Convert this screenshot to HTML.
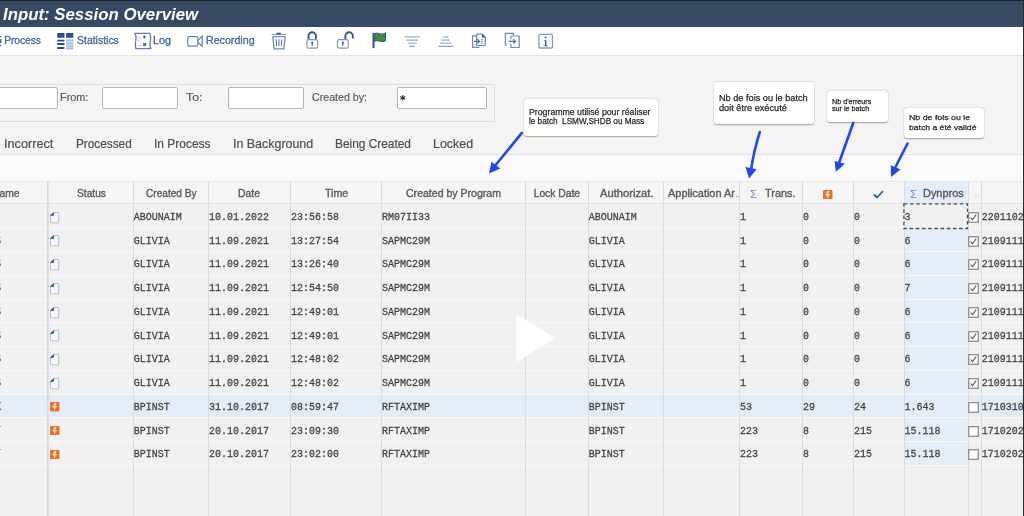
<!DOCTYPE html>
<html><head><meta charset="utf-8"><style>
html,body{margin:0;padding:0;}
body{width:1024px;height:516px;position:relative;overflow:hidden;background:#f4f4f4;font-family:'Liberation Sans', sans-serif;}
body>div,body>svg{position:absolute;}
.t{white-space:nowrap;line-height:1;}
#w{position:absolute;left:0;top:0;width:1024px;height:516px;will-change:transform;}
#w>div,#w>svg{position:absolute;}
</style></head><body><div id="w">
<div style="left:0px;top:0px;width:1024px;height:1px;background:#1c1f24"></div>
<div style="left:0px;top:1px;width:1024px;height:26px;background:#364b63"></div>
<div class="t" style="left:2.70px;top:5.60px;font-size:17.3px;font-family:'Liberation Sans', sans-serif;color:#fff;transform:scale(0.9720,1.0000);transform-origin:0 14.65px;font-weight:bold;font-style:italic">Input: Session Overview</div>
<div style="left:0px;top:27px;width:1024px;height:28px;background:#fff"></div>
<div style="left:0px;top:54.5px;width:1024px;height:1px;background:#e4e4e4"></div>
<div class="t" style="left:4.16px;top:35.65px;font-size:10.2px;font-family:'Liberation Sans', sans-serif;color:#4a6ea6;-webkit-text-stroke:0.35px #4a6ea6">Process</div>
<div class="t" style="left:76.52px;top:35.65px;font-size:10.2px;font-family:'Liberation Sans', sans-serif;color:#4a6ea6;transform:scale(1.0267,1.0000);transform-origin:0 8.60px;-webkit-text-stroke:0.35px #4a6ea6">Statistics</div>
<div class="t" style="left:153.41px;top:35.65px;font-size:10.2px;font-family:'Liberation Sans', sans-serif;color:#4a6ea6;transform:scale(1.0641,1.0000);transform-origin:0 8.60px;-webkit-text-stroke:0.35px #4a6ea6">Log</div>
<div class="t" style="left:206.12px;top:35.65px;font-size:10.2px;font-family:'Liberation Sans', sans-serif;color:#4a6ea6;transform:scale(1.0458,1.0000);transform-origin:0 8.60px;-webkit-text-stroke:0.35px #4a6ea6">Recording</div>
<div style="left:0px;top:56px;width:1024px;height:124px;background:#f4f4f4"></div>
<div style="left:-5px;top:83.5px;width:500px;height:38px;border:1px solid #dedede;box-sizing:border-box"></div>
<div style="left:-4px;top:87px;width:61.75px;height:22px;background:#fff;border:1px solid #b4b4b4;border-radius:2px;box-sizing:border-box"></div>
<div style="left:101.5px;top:87px;width:76.0px;height:22px;background:#fff;border:1px solid #b4b4b4;border-radius:2px;box-sizing:border-box"></div>
<div style="left:228px;top:87px;width:76px;height:22px;background:#fff;border:1px solid #b4b4b4;border-radius:2px;box-sizing:border-box"></div>
<div style="left:397px;top:87px;width:89.5px;height:22px;background:#fff;border:1px solid #b4b4b4;border-radius:2px;box-sizing:border-box"></div>
<div class="t" style="left:59.51px;top:92.00px;font-size:10.5px;font-family:'Liberation Sans', sans-serif;color:#555;transform:scale(1.0351,1.0000);transform-origin:0 9.25px;-webkit-text-stroke:0.15px #555">From:</div>
<div class="t" style="left:186.22px;top:92.00px;font-size:10.5px;font-family:'Liberation Sans', sans-serif;color:#555;transform:scale(1.1700,1.0000);transform-origin:0 9.25px;-webkit-text-stroke:0.15px #555">To:</div>
<div class="t" style="left:312.46px;top:92.00px;font-size:10.5px;font-family:'Liberation Sans', sans-serif;color:#555;transform:scale(1.0135,1.0000);transform-origin:0 9.25px;-webkit-text-stroke:0.15px #555">Created by:</div>
<svg style="left:399px;top:94px" width="8" height="8" viewBox="0 0 8 8"><path d="M3.8 1 V6.8 M1.3 2.45 L6.3 5.35 M1.3 5.35 L6.3 2.45" stroke="#333" stroke-width="1.1"/></svg>
<div class="t" style="left:3.83px;top:138.15px;font-size:12.2px;font-family:'Liberation Sans', sans-serif;color:#4e4e4e;transform:scale(1.0410,1.0000);transform-origin:0 10.10px;-webkit-text-stroke:0.2px #4e4e4e">Incorrect</div>
<div class="t" style="left:76.03px;top:138.15px;font-size:12.2px;font-family:'Liberation Sans', sans-serif;color:#4e4e4e;transform:scale(0.9676,1.0000);transform-origin:0 10.10px;-webkit-text-stroke:0.2px #4e4e4e">Processed</div>
<div class="t" style="left:153.89px;top:138.15px;font-size:12.2px;font-family:'Liberation Sans', sans-serif;color:#4e4e4e;transform:scale(0.9819,1.0000);transform-origin:0 10.10px;-webkit-text-stroke:0.2px #4e4e4e">In Process</div>
<div class="t" style="left:232.85px;top:138.15px;font-size:12.2px;font-family:'Liberation Sans', sans-serif;color:#4e4e4e;transform:scale(1.0202,1.0000);transform-origin:0 10.10px;-webkit-text-stroke:0.2px #4e4e4e">In Background</div>
<div class="t" style="left:335.02px;top:138.15px;font-size:12.2px;font-family:'Liberation Sans', sans-serif;color:#4e4e4e;transform:scale(0.9752,1.0000);transform-origin:0 10.10px;-webkit-text-stroke:0.2px #4e4e4e">Being Created</div>
<div class="t" style="left:433.48px;top:138.15px;font-size:12.2px;font-family:'Liberation Sans', sans-serif;color:#4e4e4e;transform:scale(1.0193,1.0000);transform-origin:0 10.10px;-webkit-text-stroke:0.2px #4e4e4e">Locked</div>
<div style="left:0px;top:153.5px;width:1024px;height:1px;background:#e2e2e2"></div>
<div style="left:0px;top:154.5px;width:1024px;height:26px;background:#fafafa"></div>
<div style="left:0px;top:180.5px;width:1024px;height:23.5px;background:#f5f5f5"></div>
<div style="left:0px;top:180.5px;width:1024px;height:1px;background:#e6e6e6"></div>
<div style="left:0px;top:203px;width:1024px;height:1px;background:#e2e2e2"></div>
<div style="left:0px;top:204px;width:1024px;height:312px;background:#f1f1f1"></div>
<div style="left:0px;top:394.0px;width:1024px;height:23.75px;background:#e3ecf7"></div>
<div style="left:904px;top:181.5px;width:64px;height:21.5px;background:#e4edf8"></div>
<div style="left:904px;top:227.75px;width:64px;height:237.5px;background:#e4edf8"></div>
<div style="left:0px;top:227.25px;width:1024px;height:1px;background:#f8f8f8"></div>
<div style="left:0px;top:251.0px;width:1024px;height:1px;background:#f8f8f8"></div>
<div style="left:0px;top:274.75px;width:1024px;height:1px;background:#f8f8f8"></div>
<div style="left:0px;top:298.5px;width:1024px;height:1px;background:#f8f8f8"></div>
<div style="left:0px;top:322.25px;width:1024px;height:1px;background:#f8f8f8"></div>
<div style="left:0px;top:346.0px;width:1024px;height:1px;background:#f8f8f8"></div>
<div style="left:0px;top:369.75px;width:1024px;height:1px;background:#f8f8f8"></div>
<div style="left:0px;top:393.5px;width:1024px;height:1px;background:#f8f8f8"></div>
<div style="left:0px;top:417.25px;width:1024px;height:1px;background:#f8f8f8"></div>
<div style="left:0px;top:441.0px;width:1024px;height:1px;background:#f8f8f8"></div>
<div style="left:0px;top:464.75px;width:1024px;height:1px;background:#f8f8f8"></div>
<div style="left:132.8px;top:180.5px;width:1px;height:335.5px;background:#dcdcdc"></div>
<div style="left:207.9px;top:180.5px;width:1px;height:335.5px;background:#dcdcdc"></div>
<div style="left:290.1px;top:180.5px;width:1px;height:335.5px;background:#dcdcdc"></div>
<div style="left:381.1px;top:180.5px;width:1px;height:335.5px;background:#dcdcdc"></div>
<div style="left:524.6px;top:180.5px;width:1px;height:335.5px;background:#dcdcdc"></div>
<div style="left:587.8px;top:180.5px;width:1px;height:335.5px;background:#dcdcdc"></div>
<div style="left:663.0px;top:180.5px;width:1px;height:335.5px;background:#dcdcdc"></div>
<div style="left:739.1px;top:180.5px;width:1px;height:335.5px;background:#dcdcdc"></div>
<div style="left:802.0px;top:180.5px;width:1px;height:335.5px;background:#dcdcdc"></div>
<div style="left:853.0px;top:180.5px;width:1px;height:335.5px;background:#dcdcdc"></div>
<div style="left:903.5px;top:180.5px;width:1px;height:335.5px;background:#dcdcdc"></div>
<div style="left:967.5px;top:180.5px;width:1px;height:335.5px;background:#dcdcdc"></div>
<div style="left:980.8px;top:180.5px;width:1px;height:335.5px;background:#dcdcdc"></div>
<div style="left:47.3px;top:180.5px;width:2px;height:335.5px;background:linear-gradient(90deg,#d2d2d2,#e6e6e6)"></div>
<div class="t" style="left:-0.44px;top:188.60px;font-size:10.3px;font-family:'Liberation Sans', sans-serif;color:#5a5a5a;-webkit-text-stroke:0.35px #5a5a5a">ame</div>
<div class="t" style="left:77.04px;top:188.60px;font-size:10.3px;font-family:'Liberation Sans', sans-serif;color:#5a5a5a;transform:scale(0.9907,1.0000);transform-origin:0 8.65px;-webkit-text-stroke:0.35px #5a5a5a">Status</div>
<div class="t" style="left:146.24px;top:188.60px;font-size:10.3px;font-family:'Liberation Sans', sans-serif;color:#5a5a5a;transform:scale(0.9809,1.0000);transform-origin:0 8.65px;-webkit-text-stroke:0.35px #5a5a5a">Created By</div>
<div class="t" style="left:238.39px;top:188.60px;font-size:10.3px;font-family:'Liberation Sans', sans-serif;color:#5a5a5a;transform:scale(1.0140,1.0000);transform-origin:0 8.65px;-webkit-text-stroke:0.35px #5a5a5a">Date</div>
<div class="t" style="left:325.26px;top:188.60px;font-size:10.3px;font-family:'Liberation Sans', sans-serif;color:#5a5a5a;transform:scale(1.0316,1.0000);transform-origin:0 8.65px;-webkit-text-stroke:0.35px #5a5a5a">Time</div>
<div class="t" style="left:406.46px;top:188.60px;font-size:10.3px;font-family:'Liberation Sans', sans-serif;color:#5a5a5a;transform:scale(1.0244,1.0000);transform-origin:0 8.65px;-webkit-text-stroke:0.35px #5a5a5a">Created by Program</div>
<div class="t" style="left:533.66px;top:188.60px;font-size:10.3px;font-family:'Liberation Sans', sans-serif;color:#5a5a5a;-webkit-text-stroke:0.35px #5a5a5a">Lock Date</div>
<div class="t" style="left:599.98px;top:188.60px;font-size:10.3px;font-family:'Liberation Sans', sans-serif;color:#5a5a5a;transform:scale(1.0875,1.0000);transform-origin:0 8.65px;-webkit-text-stroke:0.35px #5a5a5a">Authorizat.</div>
<div class="t" style="left:668.48px;top:188.60px;font-size:10.3px;font-family:'Liberation Sans', sans-serif;color:#5a5a5a;transform:scale(1.0625,1.0000);transform-origin:0 8.65px;-webkit-text-stroke:0.35px #5a5a5a">Application Ar</div>
<div class="t" style="left:764.76px;top:188.60px;font-size:10.3px;font-family:'Liberation Sans', sans-serif;color:#5a5a5a;transform:scale(1.0582,1.0000);transform-origin:0 8.65px;-webkit-text-stroke:0.35px #5a5a5a">Trans.</div>
<div class="t" style="left:923.40px;top:188.60px;font-size:10.3px;font-family:'Liberation Sans', sans-serif;color:#5a5a5a;transform:scale(1.0612,1.0000);transform-origin:0 8.65px;-webkit-text-stroke:0.35px #5a5a5a">Dynpros</div>
<div class="t" style="left:750.00px;top:189.00px;font-size:10.5px;font-family:'Liberation Sans', sans-serif;color:#6a8cc2;transform:scale(1.0848,1.0000);transform-origin:0 9.25px;">&#931;</div>
<div class="t" style="left:910.00px;top:189.00px;font-size:10.5px;font-family:'Liberation Sans', sans-serif;color:#6a8cc2;transform:scale(1.0848,1.0000);transform-origin:0 9.25px;">&#931;</div>
<div class="t" style="left:974.45px;top:192.25px;font-size:6px;font-family:'Liberation Sans', sans-serif;color:#777;">...</div>
<div style="left:736.2px;top:196px;width:2.8px;height:1px;background:#b0b0b0"></div>
<svg style="left:823px;top:189.7px" width="9.5" height="9.5" viewBox="0 0 10 10"><rect width="10" height="10" rx="1.2" fill="#e8732c"/><path d="M4.9 1.0 L2.5 5.8 L4.7 5.8 L4.1 9.3 L7.5 4.2 L5.4 4.2 L7.0 1.0 Z" fill="#fde7c6"/></svg>
<svg style="left:873px;top:190px" width="11" height="9" viewBox="0 0 11 9"><path d="M1 4.5 L4 7.5 L10 1" fill="none" stroke="#2d5ba6" stroke-width="1.8"/></svg>
<svg style="left:49.8px;top:211.6px" width="10" height="12" viewBox="0 0 10 12"><path d="M3.3 0.5 H7.9 Q8.7 0.5 8.7 1.3 V10.0 Q8.7 10.8 7.9 10.8 H1.3 Q0.5 10.8 0.5 10.0 V3.3 Z" fill="#f7f9fc" stroke="#aebfdd" stroke-width="1"/><path d="M0.4 3.6 L3.6 0.4 L3.6 3.6 Z" fill="#2a55a0" stroke="#2a55a0" stroke-width="0.6" stroke-linejoin="round"/></svg>
<div class="t" style="left:133.80px;top:212.75px;font-size:10px;font-family:'Liberation Mono', monospace;color:#404040;transform:scale(1.0000,1.1500);transform-origin:0 7.50px;-webkit-text-stroke:0.22px #404040">ABOUNAIM</div>
<div class="t" style="left:208.90px;top:212.75px;font-size:10px;font-family:'Liberation Mono', monospace;color:#404040;transform:scale(1.0000,1.1500);transform-origin:0 7.50px;-webkit-text-stroke:0.22px #404040">10.01.2022</div>
<div class="t" style="left:291.10px;top:212.75px;font-size:10px;font-family:'Liberation Mono', monospace;color:#404040;transform:scale(1.0000,1.1500);transform-origin:0 7.50px;-webkit-text-stroke:0.22px #404040">23:56:58</div>
<div class="t" style="left:382.10px;top:212.75px;font-size:10px;font-family:'Liberation Mono', monospace;color:#404040;transform:scale(1.0000,1.1500);transform-origin:0 7.50px;-webkit-text-stroke:0.22px #404040">RM07II33</div>
<div class="t" style="left:588.80px;top:212.75px;font-size:10px;font-family:'Liberation Mono', monospace;color:#404040;transform:scale(1.0000,1.1500);transform-origin:0 7.50px;-webkit-text-stroke:0.22px #404040">ABOUNAIM</div>
<div class="t" style="left:740.10px;top:212.75px;font-size:10px;font-family:'Liberation Mono', monospace;color:#404040;transform:scale(1.0000,1.1500);transform-origin:0 7.50px;-webkit-text-stroke:0.22px #404040">1</div>
<div class="t" style="left:803.00px;top:212.75px;font-size:10px;font-family:'Liberation Mono', monospace;color:#404040;transform:scale(1.0000,1.1500);transform-origin:0 7.50px;-webkit-text-stroke:0.22px #404040">0</div>
<div class="t" style="left:854.00px;top:212.75px;font-size:10px;font-family:'Liberation Mono', monospace;color:#404040;transform:scale(1.0000,1.1500);transform-origin:0 7.50px;-webkit-text-stroke:0.22px #404040">0</div>
<div class="t" style="left:904.50px;top:212.75px;font-size:10px;font-family:'Liberation Mono', monospace;color:#404040;transform:scale(1.0000,1.1500);transform-origin:0 7.50px;-webkit-text-stroke:0.22px #404040">3</div>
<div class="t" style="left:981.80px;top:212.75px;font-size:10px;font-family:'Liberation Mono', monospace;color:#404040;transform:scale(1.0000,1.1500);transform-origin:0 7.50px;-webkit-text-stroke:0.22px #404040">2201102</div>
<svg style="left:968.2px;top:211.90px" width="11" height="11" viewBox="0 0 11 11"><rect x="0.7" y="0.7" width="9.6" height="9.6" fill="#fff" stroke="#8e8e8e" stroke-width="1.3"/><path d="M2.6 5.6 L4.5 7.7 L8.2 2.6" fill="none" stroke="#5a5a5a" stroke-width="1.1"/></svg>
<svg style="left:49.8px;top:235.35px" width="10" height="12" viewBox="0 0 10 12"><path d="M3.3 0.5 H7.9 Q8.7 0.5 8.7 1.3 V10.0 Q8.7 10.8 7.9 10.8 H1.3 Q0.5 10.8 0.5 10.0 V3.3 Z" fill="#f7f9fc" stroke="#aebfdd" stroke-width="1"/><path d="M0.4 3.6 L3.6 0.4 L3.6 3.6 Z" fill="#2a55a0" stroke="#2a55a0" stroke-width="0.6" stroke-linejoin="round"/></svg>
<div class="t" style="left:133.80px;top:236.75px;font-size:10px;font-family:'Liberation Mono', monospace;color:#404040;transform:scale(1.0000,1.1500);transform-origin:0 7.50px;-webkit-text-stroke:0.22px #404040">GLIVIA</div>
<div class="t" style="left:208.90px;top:236.75px;font-size:10px;font-family:'Liberation Mono', monospace;color:#404040;transform:scale(1.0000,1.1500);transform-origin:0 7.50px;-webkit-text-stroke:0.22px #404040">11.09.2021</div>
<div class="t" style="left:291.10px;top:236.75px;font-size:10px;font-family:'Liberation Mono', monospace;color:#404040;transform:scale(1.0000,1.1500);transform-origin:0 7.50px;-webkit-text-stroke:0.22px #404040">13:27:54</div>
<div class="t" style="left:382.10px;top:236.75px;font-size:10px;font-family:'Liberation Mono', monospace;color:#404040;transform:scale(1.0000,1.1500);transform-origin:0 7.50px;-webkit-text-stroke:0.22px #404040">SAPMC29M</div>
<div class="t" style="left:588.80px;top:236.75px;font-size:10px;font-family:'Liberation Mono', monospace;color:#404040;transform:scale(1.0000,1.1500);transform-origin:0 7.50px;-webkit-text-stroke:0.22px #404040">GLIVIA</div>
<div class="t" style="left:740.10px;top:236.75px;font-size:10px;font-family:'Liberation Mono', monospace;color:#404040;transform:scale(1.0000,1.1500);transform-origin:0 7.50px;-webkit-text-stroke:0.22px #404040">1</div>
<div class="t" style="left:803.00px;top:236.75px;font-size:10px;font-family:'Liberation Mono', monospace;color:#404040;transform:scale(1.0000,1.1500);transform-origin:0 7.50px;-webkit-text-stroke:0.22px #404040">0</div>
<div class="t" style="left:854.00px;top:236.75px;font-size:10px;font-family:'Liberation Mono', monospace;color:#404040;transform:scale(1.0000,1.1500);transform-origin:0 7.50px;-webkit-text-stroke:0.22px #404040">0</div>
<div class="t" style="left:904.50px;top:236.75px;font-size:10px;font-family:'Liberation Mono', monospace;color:#404040;transform:scale(1.0000,1.1500);transform-origin:0 7.50px;-webkit-text-stroke:0.22px #404040">6</div>
<div class="t" style="left:981.80px;top:236.75px;font-size:10px;font-family:'Liberation Mono', monospace;color:#404040;transform:scale(1.0000,1.1500);transform-origin:0 7.50px;-webkit-text-stroke:0.22px #404040">2109111</div>
<div class="t" style="left:-5.45px;top:235.75px;font-size:10px;font-family:'Liberation Sans', sans-serif;color:#404040;">S</div>
<svg style="left:968.2px;top:235.65px" width="11" height="11" viewBox="0 0 11 11"><rect x="0.7" y="0.7" width="9.6" height="9.6" fill="#fff" stroke="#8e8e8e" stroke-width="1.3"/><path d="M2.6 5.6 L4.5 7.7 L8.2 2.6" fill="none" stroke="#5a5a5a" stroke-width="1.1"/></svg>
<svg style="left:49.8px;top:259.1px" width="10" height="12" viewBox="0 0 10 12"><path d="M3.3 0.5 H7.9 Q8.7 0.5 8.7 1.3 V10.0 Q8.7 10.8 7.9 10.8 H1.3 Q0.5 10.8 0.5 10.0 V3.3 Z" fill="#f7f9fc" stroke="#aebfdd" stroke-width="1"/><path d="M0.4 3.6 L3.6 0.4 L3.6 3.6 Z" fill="#2a55a0" stroke="#2a55a0" stroke-width="0.6" stroke-linejoin="round"/></svg>
<div class="t" style="left:133.80px;top:259.75px;font-size:10px;font-family:'Liberation Mono', monospace;color:#404040;transform:scale(1.0000,1.1500);transform-origin:0 7.50px;-webkit-text-stroke:0.22px #404040">GLIVIA</div>
<div class="t" style="left:208.90px;top:259.75px;font-size:10px;font-family:'Liberation Mono', monospace;color:#404040;transform:scale(1.0000,1.1500);transform-origin:0 7.50px;-webkit-text-stroke:0.22px #404040">11.09.2021</div>
<div class="t" style="left:291.10px;top:259.75px;font-size:10px;font-family:'Liberation Mono', monospace;color:#404040;transform:scale(1.0000,1.1500);transform-origin:0 7.50px;-webkit-text-stroke:0.22px #404040">13:26:40</div>
<div class="t" style="left:382.10px;top:259.75px;font-size:10px;font-family:'Liberation Mono', monospace;color:#404040;transform:scale(1.0000,1.1500);transform-origin:0 7.50px;-webkit-text-stroke:0.22px #404040">SAPMC29M</div>
<div class="t" style="left:588.80px;top:259.75px;font-size:10px;font-family:'Liberation Mono', monospace;color:#404040;transform:scale(1.0000,1.1500);transform-origin:0 7.50px;-webkit-text-stroke:0.22px #404040">GLIVIA</div>
<div class="t" style="left:740.10px;top:259.75px;font-size:10px;font-family:'Liberation Mono', monospace;color:#404040;transform:scale(1.0000,1.1500);transform-origin:0 7.50px;-webkit-text-stroke:0.22px #404040">1</div>
<div class="t" style="left:803.00px;top:259.75px;font-size:10px;font-family:'Liberation Mono', monospace;color:#404040;transform:scale(1.0000,1.1500);transform-origin:0 7.50px;-webkit-text-stroke:0.22px #404040">0</div>
<div class="t" style="left:854.00px;top:259.75px;font-size:10px;font-family:'Liberation Mono', monospace;color:#404040;transform:scale(1.0000,1.1500);transform-origin:0 7.50px;-webkit-text-stroke:0.22px #404040">0</div>
<div class="t" style="left:904.50px;top:259.75px;font-size:10px;font-family:'Liberation Mono', monospace;color:#404040;transform:scale(1.0000,1.1500);transform-origin:0 7.50px;-webkit-text-stroke:0.22px #404040">6</div>
<div class="t" style="left:981.80px;top:259.75px;font-size:10px;font-family:'Liberation Mono', monospace;color:#404040;transform:scale(1.0000,1.1500);transform-origin:0 7.50px;-webkit-text-stroke:0.22px #404040">2109111</div>
<div class="t" style="left:-5.45px;top:258.75px;font-size:10px;font-family:'Liberation Sans', sans-serif;color:#404040;">S</div>
<svg style="left:968.2px;top:259.40px" width="11" height="11" viewBox="0 0 11 11"><rect x="0.7" y="0.7" width="9.6" height="9.6" fill="#fff" stroke="#8e8e8e" stroke-width="1.3"/><path d="M2.6 5.6 L4.5 7.7 L8.2 2.6" fill="none" stroke="#5a5a5a" stroke-width="1.1"/></svg>
<svg style="left:49.8px;top:282.85px" width="10" height="12" viewBox="0 0 10 12"><path d="M3.3 0.5 H7.9 Q8.7 0.5 8.7 1.3 V10.0 Q8.7 10.8 7.9 10.8 H1.3 Q0.5 10.8 0.5 10.0 V3.3 Z" fill="#f7f9fc" stroke="#aebfdd" stroke-width="1"/><path d="M0.4 3.6 L3.6 0.4 L3.6 3.6 Z" fill="#2a55a0" stroke="#2a55a0" stroke-width="0.6" stroke-linejoin="round"/></svg>
<div class="t" style="left:133.80px;top:283.75px;font-size:10px;font-family:'Liberation Mono', monospace;color:#404040;transform:scale(1.0000,1.1500);transform-origin:0 7.50px;-webkit-text-stroke:0.22px #404040">GLIVIA</div>
<div class="t" style="left:208.90px;top:283.75px;font-size:10px;font-family:'Liberation Mono', monospace;color:#404040;transform:scale(1.0000,1.1500);transform-origin:0 7.50px;-webkit-text-stroke:0.22px #404040">11.09.2021</div>
<div class="t" style="left:291.10px;top:283.75px;font-size:10px;font-family:'Liberation Mono', monospace;color:#404040;transform:scale(1.0000,1.1500);transform-origin:0 7.50px;-webkit-text-stroke:0.22px #404040">12:54:50</div>
<div class="t" style="left:382.10px;top:283.75px;font-size:10px;font-family:'Liberation Mono', monospace;color:#404040;transform:scale(1.0000,1.1500);transform-origin:0 7.50px;-webkit-text-stroke:0.22px #404040">SAPMC29M</div>
<div class="t" style="left:588.80px;top:283.75px;font-size:10px;font-family:'Liberation Mono', monospace;color:#404040;transform:scale(1.0000,1.1500);transform-origin:0 7.50px;-webkit-text-stroke:0.22px #404040">GLIVIA</div>
<div class="t" style="left:740.10px;top:283.75px;font-size:10px;font-family:'Liberation Mono', monospace;color:#404040;transform:scale(1.0000,1.1500);transform-origin:0 7.50px;-webkit-text-stroke:0.22px #404040">1</div>
<div class="t" style="left:803.00px;top:283.75px;font-size:10px;font-family:'Liberation Mono', monospace;color:#404040;transform:scale(1.0000,1.1500);transform-origin:0 7.50px;-webkit-text-stroke:0.22px #404040">0</div>
<div class="t" style="left:854.00px;top:283.75px;font-size:10px;font-family:'Liberation Mono', monospace;color:#404040;transform:scale(1.0000,1.1500);transform-origin:0 7.50px;-webkit-text-stroke:0.22px #404040">0</div>
<div class="t" style="left:904.50px;top:283.75px;font-size:10px;font-family:'Liberation Mono', monospace;color:#404040;transform:scale(1.0000,1.1500);transform-origin:0 7.50px;-webkit-text-stroke:0.22px #404040">7</div>
<div class="t" style="left:981.80px;top:283.75px;font-size:10px;font-family:'Liberation Mono', monospace;color:#404040;transform:scale(1.0000,1.1500);transform-origin:0 7.50px;-webkit-text-stroke:0.22px #404040">2109111</div>
<div class="t" style="left:-5.45px;top:282.75px;font-size:10px;font-family:'Liberation Sans', sans-serif;color:#404040;">S</div>
<svg style="left:968.2px;top:283.15px" width="11" height="11" viewBox="0 0 11 11"><rect x="0.7" y="0.7" width="9.6" height="9.6" fill="#fff" stroke="#8e8e8e" stroke-width="1.3"/><path d="M2.6 5.6 L4.5 7.7 L8.2 2.6" fill="none" stroke="#5a5a5a" stroke-width="1.1"/></svg>
<svg style="left:49.8px;top:306.6px" width="10" height="12" viewBox="0 0 10 12"><path d="M3.3 0.5 H7.9 Q8.7 0.5 8.7 1.3 V10.0 Q8.7 10.8 7.9 10.8 H1.3 Q0.5 10.8 0.5 10.0 V3.3 Z" fill="#f7f9fc" stroke="#aebfdd" stroke-width="1"/><path d="M0.4 3.6 L3.6 0.4 L3.6 3.6 Z" fill="#2a55a0" stroke="#2a55a0" stroke-width="0.6" stroke-linejoin="round"/></svg>
<div class="t" style="left:133.80px;top:307.75px;font-size:10px;font-family:'Liberation Mono', monospace;color:#404040;transform:scale(1.0000,1.1500);transform-origin:0 7.50px;-webkit-text-stroke:0.22px #404040">GLIVIA</div>
<div class="t" style="left:208.90px;top:307.75px;font-size:10px;font-family:'Liberation Mono', monospace;color:#404040;transform:scale(1.0000,1.1500);transform-origin:0 7.50px;-webkit-text-stroke:0.22px #404040">11.09.2021</div>
<div class="t" style="left:291.10px;top:307.75px;font-size:10px;font-family:'Liberation Mono', monospace;color:#404040;transform:scale(1.0000,1.1500);transform-origin:0 7.50px;-webkit-text-stroke:0.22px #404040">12:49:01</div>
<div class="t" style="left:382.10px;top:307.75px;font-size:10px;font-family:'Liberation Mono', monospace;color:#404040;transform:scale(1.0000,1.1500);transform-origin:0 7.50px;-webkit-text-stroke:0.22px #404040">SAPMC29M</div>
<div class="t" style="left:588.80px;top:307.75px;font-size:10px;font-family:'Liberation Mono', monospace;color:#404040;transform:scale(1.0000,1.1500);transform-origin:0 7.50px;-webkit-text-stroke:0.22px #404040">GLIVIA</div>
<div class="t" style="left:740.10px;top:307.75px;font-size:10px;font-family:'Liberation Mono', monospace;color:#404040;transform:scale(1.0000,1.1500);transform-origin:0 7.50px;-webkit-text-stroke:0.22px #404040">1</div>
<div class="t" style="left:803.00px;top:307.75px;font-size:10px;font-family:'Liberation Mono', monospace;color:#404040;transform:scale(1.0000,1.1500);transform-origin:0 7.50px;-webkit-text-stroke:0.22px #404040">0</div>
<div class="t" style="left:854.00px;top:307.75px;font-size:10px;font-family:'Liberation Mono', monospace;color:#404040;transform:scale(1.0000,1.1500);transform-origin:0 7.50px;-webkit-text-stroke:0.22px #404040">0</div>
<div class="t" style="left:904.50px;top:307.75px;font-size:10px;font-family:'Liberation Mono', monospace;color:#404040;transform:scale(1.0000,1.1500);transform-origin:0 7.50px;-webkit-text-stroke:0.22px #404040">6</div>
<div class="t" style="left:981.80px;top:307.75px;font-size:10px;font-family:'Liberation Mono', monospace;color:#404040;transform:scale(1.0000,1.1500);transform-origin:0 7.50px;-webkit-text-stroke:0.22px #404040">2109111</div>
<div class="t" style="left:-5.45px;top:306.75px;font-size:10px;font-family:'Liberation Sans', sans-serif;color:#404040;">S</div>
<svg style="left:968.2px;top:306.90px" width="11" height="11" viewBox="0 0 11 11"><rect x="0.7" y="0.7" width="9.6" height="9.6" fill="#fff" stroke="#8e8e8e" stroke-width="1.3"/><path d="M2.6 5.6 L4.5 7.7 L8.2 2.6" fill="none" stroke="#5a5a5a" stroke-width="1.1"/></svg>
<svg style="left:49.8px;top:330.35px" width="10" height="12" viewBox="0 0 10 12"><path d="M3.3 0.5 H7.9 Q8.7 0.5 8.7 1.3 V10.0 Q8.7 10.8 7.9 10.8 H1.3 Q0.5 10.8 0.5 10.0 V3.3 Z" fill="#f7f9fc" stroke="#aebfdd" stroke-width="1"/><path d="M0.4 3.6 L3.6 0.4 L3.6 3.6 Z" fill="#2a55a0" stroke="#2a55a0" stroke-width="0.6" stroke-linejoin="round"/></svg>
<div class="t" style="left:133.80px;top:331.75px;font-size:10px;font-family:'Liberation Mono', monospace;color:#404040;transform:scale(1.0000,1.1500);transform-origin:0 7.50px;-webkit-text-stroke:0.22px #404040">GLIVIA</div>
<div class="t" style="left:208.90px;top:331.75px;font-size:10px;font-family:'Liberation Mono', monospace;color:#404040;transform:scale(1.0000,1.1500);transform-origin:0 7.50px;-webkit-text-stroke:0.22px #404040">11.09.2021</div>
<div class="t" style="left:291.10px;top:331.75px;font-size:10px;font-family:'Liberation Mono', monospace;color:#404040;transform:scale(1.0000,1.1500);transform-origin:0 7.50px;-webkit-text-stroke:0.22px #404040">12:49:01</div>
<div class="t" style="left:382.10px;top:331.75px;font-size:10px;font-family:'Liberation Mono', monospace;color:#404040;transform:scale(1.0000,1.1500);transform-origin:0 7.50px;-webkit-text-stroke:0.22px #404040">SAPMC29M</div>
<div class="t" style="left:588.80px;top:331.75px;font-size:10px;font-family:'Liberation Mono', monospace;color:#404040;transform:scale(1.0000,1.1500);transform-origin:0 7.50px;-webkit-text-stroke:0.22px #404040">GLIVIA</div>
<div class="t" style="left:740.10px;top:331.75px;font-size:10px;font-family:'Liberation Mono', monospace;color:#404040;transform:scale(1.0000,1.1500);transform-origin:0 7.50px;-webkit-text-stroke:0.22px #404040">1</div>
<div class="t" style="left:803.00px;top:331.75px;font-size:10px;font-family:'Liberation Mono', monospace;color:#404040;transform:scale(1.0000,1.1500);transform-origin:0 7.50px;-webkit-text-stroke:0.22px #404040">0</div>
<div class="t" style="left:854.00px;top:331.75px;font-size:10px;font-family:'Liberation Mono', monospace;color:#404040;transform:scale(1.0000,1.1500);transform-origin:0 7.50px;-webkit-text-stroke:0.22px #404040">0</div>
<div class="t" style="left:904.50px;top:331.75px;font-size:10px;font-family:'Liberation Mono', monospace;color:#404040;transform:scale(1.0000,1.1500);transform-origin:0 7.50px;-webkit-text-stroke:0.22px #404040">6</div>
<div class="t" style="left:981.80px;top:331.75px;font-size:10px;font-family:'Liberation Mono', monospace;color:#404040;transform:scale(1.0000,1.1500);transform-origin:0 7.50px;-webkit-text-stroke:0.22px #404040">2109111</div>
<div class="t" style="left:-5.45px;top:330.75px;font-size:10px;font-family:'Liberation Sans', sans-serif;color:#404040;">S</div>
<svg style="left:968.2px;top:330.65px" width="11" height="11" viewBox="0 0 11 11"><rect x="0.7" y="0.7" width="9.6" height="9.6" fill="#fff" stroke="#8e8e8e" stroke-width="1.3"/><path d="M2.6 5.6 L4.5 7.7 L8.2 2.6" fill="none" stroke="#5a5a5a" stroke-width="1.1"/></svg>
<svg style="left:49.8px;top:354.1px" width="10" height="12" viewBox="0 0 10 12"><path d="M3.3 0.5 H7.9 Q8.7 0.5 8.7 1.3 V10.0 Q8.7 10.8 7.9 10.8 H1.3 Q0.5 10.8 0.5 10.0 V3.3 Z" fill="#f7f9fc" stroke="#aebfdd" stroke-width="1"/><path d="M0.4 3.6 L3.6 0.4 L3.6 3.6 Z" fill="#2a55a0" stroke="#2a55a0" stroke-width="0.6" stroke-linejoin="round"/></svg>
<div class="t" style="left:133.80px;top:354.75px;font-size:10px;font-family:'Liberation Mono', monospace;color:#404040;transform:scale(1.0000,1.1500);transform-origin:0 7.50px;-webkit-text-stroke:0.22px #404040">GLIVIA</div>
<div class="t" style="left:208.90px;top:354.75px;font-size:10px;font-family:'Liberation Mono', monospace;color:#404040;transform:scale(1.0000,1.1500);transform-origin:0 7.50px;-webkit-text-stroke:0.22px #404040">11.09.2021</div>
<div class="t" style="left:291.10px;top:354.75px;font-size:10px;font-family:'Liberation Mono', monospace;color:#404040;transform:scale(1.0000,1.1500);transform-origin:0 7.50px;-webkit-text-stroke:0.22px #404040">12:48:02</div>
<div class="t" style="left:382.10px;top:354.75px;font-size:10px;font-family:'Liberation Mono', monospace;color:#404040;transform:scale(1.0000,1.1500);transform-origin:0 7.50px;-webkit-text-stroke:0.22px #404040">SAPMC29M</div>
<div class="t" style="left:588.80px;top:354.75px;font-size:10px;font-family:'Liberation Mono', monospace;color:#404040;transform:scale(1.0000,1.1500);transform-origin:0 7.50px;-webkit-text-stroke:0.22px #404040">GLIVIA</div>
<div class="t" style="left:740.10px;top:354.75px;font-size:10px;font-family:'Liberation Mono', monospace;color:#404040;transform:scale(1.0000,1.1500);transform-origin:0 7.50px;-webkit-text-stroke:0.22px #404040">1</div>
<div class="t" style="left:803.00px;top:354.75px;font-size:10px;font-family:'Liberation Mono', monospace;color:#404040;transform:scale(1.0000,1.1500);transform-origin:0 7.50px;-webkit-text-stroke:0.22px #404040">0</div>
<div class="t" style="left:854.00px;top:354.75px;font-size:10px;font-family:'Liberation Mono', monospace;color:#404040;transform:scale(1.0000,1.1500);transform-origin:0 7.50px;-webkit-text-stroke:0.22px #404040">0</div>
<div class="t" style="left:904.50px;top:354.75px;font-size:10px;font-family:'Liberation Mono', monospace;color:#404040;transform:scale(1.0000,1.1500);transform-origin:0 7.50px;-webkit-text-stroke:0.22px #404040">6</div>
<div class="t" style="left:981.80px;top:354.75px;font-size:10px;font-family:'Liberation Mono', monospace;color:#404040;transform:scale(1.0000,1.1500);transform-origin:0 7.50px;-webkit-text-stroke:0.22px #404040">2109111</div>
<div class="t" style="left:-5.45px;top:353.75px;font-size:10px;font-family:'Liberation Sans', sans-serif;color:#404040;">S</div>
<svg style="left:968.2px;top:354.40px" width="11" height="11" viewBox="0 0 11 11"><rect x="0.7" y="0.7" width="9.6" height="9.6" fill="#fff" stroke="#8e8e8e" stroke-width="1.3"/><path d="M2.6 5.6 L4.5 7.7 L8.2 2.6" fill="none" stroke="#5a5a5a" stroke-width="1.1"/></svg>
<svg style="left:49.8px;top:377.85px" width="10" height="12" viewBox="0 0 10 12"><path d="M3.3 0.5 H7.9 Q8.7 0.5 8.7 1.3 V10.0 Q8.7 10.8 7.9 10.8 H1.3 Q0.5 10.8 0.5 10.0 V3.3 Z" fill="#f7f9fc" stroke="#aebfdd" stroke-width="1"/><path d="M0.4 3.6 L3.6 0.4 L3.6 3.6 Z" fill="#2a55a0" stroke="#2a55a0" stroke-width="0.6" stroke-linejoin="round"/></svg>
<div class="t" style="left:133.80px;top:378.75px;font-size:10px;font-family:'Liberation Mono', monospace;color:#404040;transform:scale(1.0000,1.1500);transform-origin:0 7.50px;-webkit-text-stroke:0.22px #404040">GLIVIA</div>
<div class="t" style="left:208.90px;top:378.75px;font-size:10px;font-family:'Liberation Mono', monospace;color:#404040;transform:scale(1.0000,1.1500);transform-origin:0 7.50px;-webkit-text-stroke:0.22px #404040">11.09.2021</div>
<div class="t" style="left:291.10px;top:378.75px;font-size:10px;font-family:'Liberation Mono', monospace;color:#404040;transform:scale(1.0000,1.1500);transform-origin:0 7.50px;-webkit-text-stroke:0.22px #404040">12:48:02</div>
<div class="t" style="left:382.10px;top:378.75px;font-size:10px;font-family:'Liberation Mono', monospace;color:#404040;transform:scale(1.0000,1.1500);transform-origin:0 7.50px;-webkit-text-stroke:0.22px #404040">SAPMC29M</div>
<div class="t" style="left:588.80px;top:378.75px;font-size:10px;font-family:'Liberation Mono', monospace;color:#404040;transform:scale(1.0000,1.1500);transform-origin:0 7.50px;-webkit-text-stroke:0.22px #404040">GLIVIA</div>
<div class="t" style="left:740.10px;top:378.75px;font-size:10px;font-family:'Liberation Mono', monospace;color:#404040;transform:scale(1.0000,1.1500);transform-origin:0 7.50px;-webkit-text-stroke:0.22px #404040">1</div>
<div class="t" style="left:803.00px;top:378.75px;font-size:10px;font-family:'Liberation Mono', monospace;color:#404040;transform:scale(1.0000,1.1500);transform-origin:0 7.50px;-webkit-text-stroke:0.22px #404040">0</div>
<div class="t" style="left:854.00px;top:378.75px;font-size:10px;font-family:'Liberation Mono', monospace;color:#404040;transform:scale(1.0000,1.1500);transform-origin:0 7.50px;-webkit-text-stroke:0.22px #404040">0</div>
<div class="t" style="left:904.50px;top:378.75px;font-size:10px;font-family:'Liberation Mono', monospace;color:#404040;transform:scale(1.0000,1.1500);transform-origin:0 7.50px;-webkit-text-stroke:0.22px #404040">6</div>
<div class="t" style="left:981.80px;top:378.75px;font-size:10px;font-family:'Liberation Mono', monospace;color:#404040;transform:scale(1.0000,1.1500);transform-origin:0 7.50px;-webkit-text-stroke:0.22px #404040">2109111</div>
<div class="t" style="left:-5.45px;top:377.75px;font-size:10px;font-family:'Liberation Sans', sans-serif;color:#404040;">S</div>
<svg style="left:968.2px;top:378.15px" width="11" height="11" viewBox="0 0 11 11"><rect x="0.7" y="0.7" width="9.6" height="9.6" fill="#fff" stroke="#8e8e8e" stroke-width="1.3"/><path d="M2.6 5.6 L4.5 7.7 L8.2 2.6" fill="none" stroke="#5a5a5a" stroke-width="1.1"/></svg>
<svg style="left:50px;top:402.0px" width="9.5" height="9.5" viewBox="0 0 10 10"><rect width="10" height="10" rx="1.2" fill="#e8732c"/><path d="M4.9 1.0 L2.5 5.8 L4.7 5.8 L4.1 9.3 L7.5 4.2 L5.4 4.2 L7.0 1.0 Z" fill="#fde7c6"/></svg>
<div class="t" style="left:133.80px;top:402.75px;font-size:10px;font-family:'Liberation Mono', monospace;color:#404040;transform:scale(1.0000,1.1500);transform-origin:0 7.50px;-webkit-text-stroke:0.22px #404040">BPINST</div>
<div class="t" style="left:208.90px;top:402.75px;font-size:10px;font-family:'Liberation Mono', monospace;color:#404040;transform:scale(1.0000,1.1500);transform-origin:0 7.50px;-webkit-text-stroke:0.22px #404040">31.10.2017</div>
<div class="t" style="left:291.10px;top:402.75px;font-size:10px;font-family:'Liberation Mono', monospace;color:#404040;transform:scale(1.0000,1.1500);transform-origin:0 7.50px;-webkit-text-stroke:0.22px #404040">08:59:47</div>
<div class="t" style="left:382.10px;top:402.75px;font-size:10px;font-family:'Liberation Mono', monospace;color:#404040;transform:scale(1.0000,1.1500);transform-origin:0 7.50px;-webkit-text-stroke:0.22px #404040">RFTAXIMP</div>
<div class="t" style="left:588.80px;top:402.75px;font-size:10px;font-family:'Liberation Mono', monospace;color:#404040;transform:scale(1.0000,1.1500);transform-origin:0 7.50px;-webkit-text-stroke:0.22px #404040">BPINST</div>
<div class="t" style="left:740.10px;top:402.75px;font-size:10px;font-family:'Liberation Mono', monospace;color:#404040;transform:scale(1.0000,1.1500);transform-origin:0 7.50px;-webkit-text-stroke:0.22px #404040">53</div>
<div class="t" style="left:803.00px;top:402.75px;font-size:10px;font-family:'Liberation Mono', monospace;color:#404040;transform:scale(1.0000,1.1500);transform-origin:0 7.50px;-webkit-text-stroke:0.22px #404040">29</div>
<div class="t" style="left:854.00px;top:402.75px;font-size:10px;font-family:'Liberation Mono', monospace;color:#404040;transform:scale(1.0000,1.1500);transform-origin:0 7.50px;-webkit-text-stroke:0.22px #404040">24</div>
<div class="t" style="left:904.50px;top:402.75px;font-size:10px;font-family:'Liberation Mono', monospace;color:#404040;transform:scale(1.0000,1.1500);transform-origin:0 7.50px;-webkit-text-stroke:0.22px #404040">1.643</div>
<div class="t" style="left:981.80px;top:402.75px;font-size:10px;font-family:'Liberation Mono', monospace;color:#404040;transform:scale(1.0000,1.1500);transform-origin:0 7.50px;-webkit-text-stroke:0.22px #404040">1710310</div>
<div class="t" style="left:-5.22px;top:401.75px;font-size:10px;font-family:'Liberation Sans', sans-serif;color:#404040;">X</div>
<svg style="left:968.2px;top:401.90px" width="11" height="11" viewBox="0 0 11 11"><rect x="0.7" y="0.7" width="9.6" height="9.6" fill="#fff" stroke="#8e8e8e" stroke-width="1.3"/></svg>
<svg style="left:50px;top:425.75px" width="9.5" height="9.5" viewBox="0 0 10 10"><rect width="10" height="10" rx="1.2" fill="#e8732c"/><path d="M4.9 1.0 L2.5 5.8 L4.7 5.8 L4.1 9.3 L7.5 4.2 L5.4 4.2 L7.0 1.0 Z" fill="#fde7c6"/></svg>
<div class="t" style="left:133.80px;top:426.75px;font-size:10px;font-family:'Liberation Mono', monospace;color:#404040;transform:scale(1.0000,1.1500);transform-origin:0 7.50px;-webkit-text-stroke:0.22px #404040">BPINST</div>
<div class="t" style="left:208.90px;top:426.75px;font-size:10px;font-family:'Liberation Mono', monospace;color:#404040;transform:scale(1.0000,1.1500);transform-origin:0 7.50px;-webkit-text-stroke:0.22px #404040">20.10.2017</div>
<div class="t" style="left:291.10px;top:426.75px;font-size:10px;font-family:'Liberation Mono', monospace;color:#404040;transform:scale(1.0000,1.1500);transform-origin:0 7.50px;-webkit-text-stroke:0.22px #404040">23:09:30</div>
<div class="t" style="left:382.10px;top:426.75px;font-size:10px;font-family:'Liberation Mono', monospace;color:#404040;transform:scale(1.0000,1.1500);transform-origin:0 7.50px;-webkit-text-stroke:0.22px #404040">RFTAXIMP</div>
<div class="t" style="left:588.80px;top:426.75px;font-size:10px;font-family:'Liberation Mono', monospace;color:#404040;transform:scale(1.0000,1.1500);transform-origin:0 7.50px;-webkit-text-stroke:0.22px #404040">BPINST</div>
<div class="t" style="left:740.10px;top:426.75px;font-size:10px;font-family:'Liberation Mono', monospace;color:#404040;transform:scale(1.0000,1.1500);transform-origin:0 7.50px;-webkit-text-stroke:0.22px #404040">223</div>
<div class="t" style="left:803.00px;top:426.75px;font-size:10px;font-family:'Liberation Mono', monospace;color:#404040;transform:scale(1.0000,1.1500);transform-origin:0 7.50px;-webkit-text-stroke:0.22px #404040">8</div>
<div class="t" style="left:854.00px;top:426.75px;font-size:10px;font-family:'Liberation Mono', monospace;color:#404040;transform:scale(1.0000,1.1500);transform-origin:0 7.50px;-webkit-text-stroke:0.22px #404040">215</div>
<div class="t" style="left:904.50px;top:426.75px;font-size:10px;font-family:'Liberation Mono', monospace;color:#404040;transform:scale(1.0000,1.1500);transform-origin:0 7.50px;-webkit-text-stroke:0.22px #404040">15.118</div>
<div class="t" style="left:981.80px;top:426.75px;font-size:10px;font-family:'Liberation Mono', monospace;color:#404040;transform:scale(1.0000,1.1500);transform-origin:0 7.50px;-webkit-text-stroke:0.22px #404040">1710202</div>
<div class="t" style="left:-5.22px;top:425.75px;font-size:10px;font-family:'Liberation Sans', sans-serif;color:#404040;">T</div>
<svg style="left:968.2px;top:425.65px" width="11" height="11" viewBox="0 0 11 11"><rect x="0.7" y="0.7" width="9.6" height="9.6" fill="#fff" stroke="#8e8e8e" stroke-width="1.3"/></svg>
<svg style="left:50px;top:449.5px" width="9.5" height="9.5" viewBox="0 0 10 10"><rect width="10" height="10" rx="1.2" fill="#e8732c"/><path d="M4.9 1.0 L2.5 5.8 L4.7 5.8 L4.1 9.3 L7.5 4.2 L5.4 4.2 L7.0 1.0 Z" fill="#fde7c6"/></svg>
<div class="t" style="left:133.80px;top:449.75px;font-size:10px;font-family:'Liberation Mono', monospace;color:#404040;transform:scale(1.0000,1.1500);transform-origin:0 7.50px;-webkit-text-stroke:0.22px #404040">BPINST</div>
<div class="t" style="left:208.90px;top:449.75px;font-size:10px;font-family:'Liberation Mono', monospace;color:#404040;transform:scale(1.0000,1.1500);transform-origin:0 7.50px;-webkit-text-stroke:0.22px #404040">20.10.2017</div>
<div class="t" style="left:291.10px;top:449.75px;font-size:10px;font-family:'Liberation Mono', monospace;color:#404040;transform:scale(1.0000,1.1500);transform-origin:0 7.50px;-webkit-text-stroke:0.22px #404040">23:02:00</div>
<div class="t" style="left:382.10px;top:449.75px;font-size:10px;font-family:'Liberation Mono', monospace;color:#404040;transform:scale(1.0000,1.1500);transform-origin:0 7.50px;-webkit-text-stroke:0.22px #404040">RFTAXIMP</div>
<div class="t" style="left:588.80px;top:449.75px;font-size:10px;font-family:'Liberation Mono', monospace;color:#404040;transform:scale(1.0000,1.1500);transform-origin:0 7.50px;-webkit-text-stroke:0.22px #404040">BPINST</div>
<div class="t" style="left:740.10px;top:449.75px;font-size:10px;font-family:'Liberation Mono', monospace;color:#404040;transform:scale(1.0000,1.1500);transform-origin:0 7.50px;-webkit-text-stroke:0.22px #404040">223</div>
<div class="t" style="left:803.00px;top:449.75px;font-size:10px;font-family:'Liberation Mono', monospace;color:#404040;transform:scale(1.0000,1.1500);transform-origin:0 7.50px;-webkit-text-stroke:0.22px #404040">8</div>
<div class="t" style="left:854.00px;top:449.75px;font-size:10px;font-family:'Liberation Mono', monospace;color:#404040;transform:scale(1.0000,1.1500);transform-origin:0 7.50px;-webkit-text-stroke:0.22px #404040">215</div>
<div class="t" style="left:904.50px;top:449.75px;font-size:10px;font-family:'Liberation Mono', monospace;color:#404040;transform:scale(1.0000,1.1500);transform-origin:0 7.50px;-webkit-text-stroke:0.22px #404040">15.118</div>
<div class="t" style="left:981.80px;top:449.75px;font-size:10px;font-family:'Liberation Mono', monospace;color:#404040;transform:scale(1.0000,1.1500);transform-origin:0 7.50px;-webkit-text-stroke:0.22px #404040">1710202</div>
<div class="t" style="left:-5.22px;top:448.75px;font-size:10px;font-family:'Liberation Sans', sans-serif;color:#404040;">T</div>
<svg style="left:968.2px;top:449.40px" width="11" height="11" viewBox="0 0 11 11"><rect x="0.7" y="0.7" width="9.6" height="9.6" fill="#fff" stroke="#8e8e8e" stroke-width="1.3"/></svg>
<svg style="left:900px;top:200px" width="72" height="32"><rect x="3.9" y="3.9" width="63.6" height="24.6" fill="none" stroke="#4d4d4d" stroke-width="1.3" stroke-dasharray="3.6 2.6"/></svg>
<div style="left:1022.5px;top:0px;width:1.5px;height:516px;background:#2b2b2b"></div>
<svg style="left:0;top:0" width="1024" height="60">
<!-- partial process icon at left edge -->
<path d="M-2 36.5 H1.2 M-2 45.5 H1.2" stroke="#3f66a8" stroke-width="1.4"/>
<rect x="0" y="39" width="1.4" height="4" fill="#3f66a8"/>
<!-- statistics -->
<g fill="#234f9e">
<rect x="57.2" y="33" width="7.3" height="4.8" rx="0.5"/>
<rect x="66.1" y="33" width="7.2" height="4.8" rx="0.5"/>
<rect x="57.2" y="39.8" width="7.3" height="1.8" rx="0.5"/>
<rect x="57.2" y="43" width="7.3" height="1.9" rx="0.5"/>
<rect x="57.2" y="47" width="7.3" height="2" rx="0.5"/>
</g>
<rect x="66.1" y="39.3" width="7.2" height="10.2" fill="#d3def0"/>
<g fill="#a9bcdd">
<rect x="66.1" y="39.6" width="7.2" height="1.6"/>
<rect x="66.1" y="42.6" width="7.2" height="1.6"/>
<rect x="66.1" y="45.3" width="7.2" height="1.4"/>
<rect x="66.1" y="47.6" width="7.2" height="1.8"/>
</g>
<!-- log -->
<path d="M135 33.4 H149.8 C151 36 151 38 150.3 41 C149.6 44 149.8 46 150.8 48.6 H135.9 C135 46 134.7 44 135.7 41 C136.6 38 136.4 36 135 33.4 Z" fill="#fff" stroke="#5d7db3" stroke-width="1.3"/>
<rect x="143.3" y="35.6" width="2.2" height="2.8" rx="1" fill="#2a55a0"/>
<path d="M143.3 43.2 L146 45.9 M146 43.2 L143.3 45.9" stroke="#2a55a0" stroke-width="1.3"/>
<g fill="#c3cad6"><rect x="138" y="37.3" width="3.2" height="0.9"/><rect x="138" y="40" width="1.6" height="0.9"/><rect x="138" y="42.5" width="1.6" height="0.9"/><rect x="138" y="45" width="3.2" height="0.9"/></g>
<!-- recording -->
<rect x="187.7" y="36.7" width="10.2" height="9.5" rx="1.6" fill="none" stroke="#6783b6" stroke-width="1.2"/>
<path d="M198 40.6 L202.2 36 V46.6 L198 42" fill="none" stroke="#6783b6" stroke-width="1.2" stroke-linejoin="round"/>
<!-- trash -->
<rect x="276.3" y="32.8" width="4.7" height="1.6" rx="0.8" fill="#2d5597"/>
<rect x="271.6" y="34" width="14.3" height="0.9" fill="#6d89b9"/>
<path d="M272.8 36.6 H285.2 L283.9 48.9 H274.1 Z" fill="#fff" stroke="#6f8bbb" stroke-width="1.3" stroke-linejoin="round"/>
<path d="M276.2 39.2 L276.6 46 M278.9 39.2 V46 M281.7 39.2 L281.3 46" stroke="#5b7bb2" stroke-width="1.1"/>
<!-- lock -->
<path d="M308.5 39.6 V36 A3.7 3.7 0 0 1 315.9 36 V39.6" fill="none" stroke="#2d5597" stroke-width="1.9"/>
<rect x="306.9" y="39.6" width="10.7" height="8.6" rx="1.6" fill="#fff" stroke="#8397bc" stroke-width="1.2"/>
<circle cx="312.2" cy="42.6" r="1" fill="#2d5597"/><rect x="311.6" y="42.6" width="1.2" height="3" fill="#2d5597"/>
<!-- unlock -->
<path d="M345.4 39.6 V36 A3.7 3.7 0 0 1 352.8 36 V38.6" fill="none" stroke="#2d5597" stroke-width="1.9"/>
<rect x="337.5" y="39.6" width="10.7" height="8.6" rx="1.6" fill="#fff" stroke="#8397bc" stroke-width="1.2"/>
<circle cx="342.8" cy="42.6" r="1" fill="#2d5597"/><rect x="342.2" y="42.6" width="1.2" height="3" fill="#2d5597"/>
<!-- flag -->
<rect x="372.5" y="32.8" width="2.1" height="15.3" fill="#3a5690"/>
<path d="M374.6 33.6 C377 32.6 379 33.6 381 34 C383 34.3 384.5 33.5 385.5 32.6 V40.8 C384 41.8 382 41.6 380 41.2 C378 40.8 376.5 40.6 374.6 41.2 Z" fill="#3d8a3f" stroke="#2f5a7c" stroke-width="1"/>
<!-- filter 1 -->
<g stroke-width="1.1">
<path d="M404.6 37 H419.7" stroke="#8ba5cc"/>
<path d="M406.1 40.1 H418" stroke="#9099aa"/>
<path d="M407.9 43.1 H416.7" stroke="#8ba5cc"/>
<path d="M409.3 46.3 H415" stroke="#7f9ac5"/>
<!-- filter 2 -->
<path d="M442.9 37 H448.4" stroke="#8ba5cc"/>
<path d="M441.1 40.1 H450" stroke="#9099aa"/>
<path d="M439.8 43.1 H451.7" stroke="#8ba5cc"/>
<path d="M438 46.3 H453.3" stroke="#7f9ac5"/>
</g>
<!-- export -->
<path d="M476 35.8 H472.6 V47.4 H479.5" fill="none" stroke="#6f8bbb" stroke-width="1.2"/>
<path d="M476.6 34.2 H482.2 L485.3 37.3 V45.5 H476.6 Z" fill="#fff" stroke="#6f8bbb" stroke-width="1.2"/>
<path d="M482 34 L485.6 37.6 H482 Z" fill="#2a55a0"/>
<path d="M474 41.4 H479.3 M477.3 39.2 L479.6 41.4 L477.3 43.6" fill="none" stroke="#4a6eab" stroke-width="1.1"/>
<g fill="#7890bb"><rect x="481" y="39" width="2.4" height="0.8"/><rect x="481" y="40.9" width="2.4" height="0.8"/><rect x="481" y="42.8" width="2.4" height="0.8"/></g>
<!-- import -->
<path d="M507 45 H505.4 V33.3 H513.4 V35.8" fill="none" stroke="#6f8bbb" stroke-width="1.2"/>
<path d="M510.9 36 H519.2 V47.5 H510.9 V43.5 M510.9 39.3 V36" fill="none" stroke="#6f8bbb" stroke-width="1.2"/>
<path d="M508.8 41.4 H515.3 M513.2 39.2 L515.5 41.4 L513.2 43.6" fill="none" stroke="#4a6eab" stroke-width="1.1"/>
<!-- info -->
<rect x="538.9" y="34.4" width="13.6" height="13.6" rx="1" fill="#fff" stroke="#8599bf" stroke-width="1.3"/>
<circle cx="545.5" cy="37.4" r="0.95" fill="#2a55a0"/>
<path d="M544 40.2 H546.4 V45.4 H547.9 V46.2 H543.6 V45.4 H545 V41 H544 Z" fill="#2a55a0"/>
</svg>

<div style="left:523.8px;top:99px;width:134.4000000000001px;height:36.599999999999994px;background:#fff;border-radius:3px;box-shadow:0 0.5px 1.5px rgba(0,0,0,0.35)"></div>
<div class="t" style="left:529.08px;top:107.90px;font-size:8.7px;font-family:'Liberation Sans', sans-serif;color:#2a2a2a;transform:scale(1.0066,1.0000);transform-origin:0 7.35px;-webkit-text-stroke:0.25px #2a2a2a">Programme utilisé pour réaliser</div>
<div class="t" style="left:529.12px;top:116.90px;font-size:8.7px;font-family:'Liberation Sans', sans-serif;color:#2a2a2a;transform:scale(0.9393,1.0000);transform-origin:0 7.35px;-webkit-text-stroke:0.25px #2a2a2a">le batch&nbsp; LSMW,SHDB ou Mass</div>
<div style="left:714.3px;top:82.3px;width:99.60000000000002px;height:41.8px;background:#fff;border-radius:3px;box-shadow:0 0.5px 1.5px rgba(0,0,0,0.35)"></div>
<div class="t" style="left:719.25px;top:93.75px;font-size:9.0px;font-family:'Liberation Sans', sans-serif;color:#2a2a2a;transform:scale(1.0182,1.0000);transform-origin:0 7.50px;-webkit-text-stroke:0.25px #2a2a2a">Nb de fois ou le batch</div>
<div class="t" style="left:719.25px;top:103.75px;font-size:9.0px;font-family:'Liberation Sans', sans-serif;color:#2a2a2a;transform:scale(1.0187,1.0000);transform-origin:0 7.50px;-webkit-text-stroke:0.25px #2a2a2a">doit être exécuté</div>
<div style="left:826.9px;top:90.9px;width:61.10000000000002px;height:31.0px;background:#fff;border-radius:3px;box-shadow:0 0.5px 1.5px rgba(0,0,0,0.35)"></div>
<div class="t" style="left:832.11px;top:99.35px;font-size:6.8px;font-family:'Liberation Sans', sans-serif;color:#2a2a2a;transform:scale(1.0582,1.0000);transform-origin:0 5.90px;-webkit-text-stroke:0.25px #2a2a2a">Nb d'erreurs</div>
<div class="t" style="left:832.13px;top:106.35px;font-size:6.8px;font-family:'Liberation Sans', sans-serif;color:#2a2a2a;transform:scale(1.0577,1.0000);transform-origin:0 5.90px;-webkit-text-stroke:0.25px #2a2a2a">sur le batch</div>
<div style="left:904px;top:108px;width:80.10000000000002px;height:30.400000000000006px;background:#fff;border-radius:3px;box-shadow:0 0.5px 1.5px rgba(0,0,0,0.35)"></div>
<div class="t" style="left:908.88px;top:113.85px;font-size:7.8px;font-family:'Liberation Sans', sans-serif;color:#2a2a2a;transform:scale(1.1278,1.0000);transform-origin:0 6.40px;-webkit-text-stroke:0.25px #2a2a2a">Nb de fois ou le</div>
<div class="t" style="left:908.91px;top:123.85px;font-size:7.8px;font-family:'Liberation Sans', sans-serif;color:#2a2a2a;transform:scale(1.1033,1.0000);transform-origin:0 6.40px;-webkit-text-stroke:0.25px #2a2a2a">batch a été validé</div>
<svg style="left:0;top:0" width="1024" height="516">
<g stroke="#2148ef" stroke-width="2.6" stroke-linecap="round" fill="none">
<path d="M521.9 132.9 L494 167"/>
<path d="M759.8 132.1 Q754 150 751 170"/>
<path d="M853.3 122.8 L839 163"/>
<path d="M907.5 143.5 L895 168"/>
</g>
<g fill="#2148ef">
<path d="M489 173.6 L491.5 161.7 L500.3 168.4 Z"/>
<path d="M749 178.6 L745.5 167 L756.6 169.2 Z"/>
<path d="M835.9 171.8 L834.5 160.9 L845 163.8 Z"/>
<path d="M891 177 L890.8 165.2 L900.5 169.6 Z"/>
</g>
</svg>

<svg style="left:0;top:0" width="1024" height="516"><path d="M516.3 314 L555 338 L516.3 362.3 Z" fill="#fff"/></svg>
</div></body></html>
